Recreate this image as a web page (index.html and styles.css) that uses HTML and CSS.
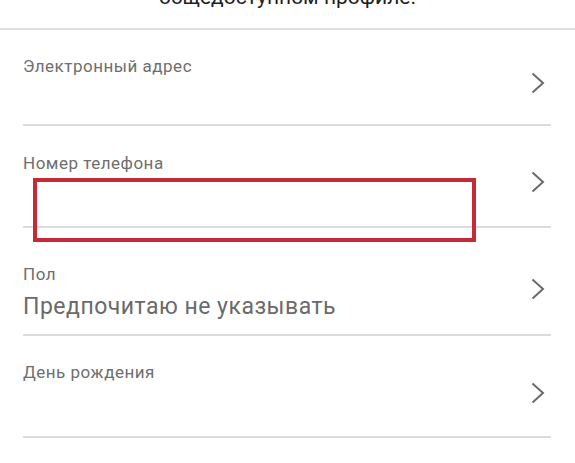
FILE: index.html
```html
<!DOCTYPE html>
<html lang="ru">
<head>
<meta charset="utf-8">
<link rel="stylesheet" href="styles.css">
</head>
<body>
<div class="page">
  <div class="intro"><p class="intro-text">общедоступном профиле.</p></div>
  <div class="list">
    <div class="row row-email">
      <div class="field">
        <div class="label">Электронный адрес</div>
      </div>
      <svg class="chev" viewBox="0 0 14 22" width="14" height="22"><polyline points="1.5,1.5 12,11 1.5,20.5" fill="none" stroke="#6a6a6a" stroke-width="2"/></svg>
    </div>
    <div class="row row-phone">
      <div class="field">
        <div class="label">Номер телефона</div>
      </div>
      <svg class="chev" viewBox="0 0 14 22" width="14" height="22"><polyline points="1.5,1.5 12,11 1.5,20.5" fill="none" stroke="#6a6a6a" stroke-width="2"/></svg>
      <div class="highlight"></div>
    </div>
    <div class="row row-gender">
      <div class="field">
        <div class="label">Пол</div>
        <div class="value">Предпочитаю не указывать</div>
      </div>
      <svg class="chev" viewBox="0 0 14 22" width="14" height="22"><polyline points="1.5,1.5 12,11 1.5,20.5" fill="none" stroke="#6a6a6a" stroke-width="2"/></svg>
    </div>
    <div class="row row-birth">
      <div class="field">
        <div class="label">День рождения</div>
      </div>
      <svg class="chev" viewBox="0 0 14 22" width="14" height="22"><polyline points="1.5,1.5 12,11 1.5,20.5" fill="none" stroke="#6a6a6a" stroke-width="2"/></svg>
    </div>
  </div>
</div>
</body>
</html>
```
FILE: styles.css
```css
html, body {
  margin: 0;
  padding: 0;
  background: #ffffff;
}
body {
  font-family: Roboto, "Noto Sans", "Liberation Sans", sans-serif;
  width: 575px;
  height: 463px;
  overflow: hidden;
}
.intro {
  height: 28px;
  overflow: hidden;
  border-bottom: 2px solid #dedede;
}
.intro-text {
  margin: -16px 0 0 0;
  text-align: center;
  font-size: 21px;
  line-height: 26px;
  color: #1e1e1e;
}
.list {
  padding: 0 24px 0 23px;
}
.row {
  position: relative;
  display: flex;
  align-items: center;
  border-bottom: 2px solid #dcdcdc;
  box-sizing: border-box;
}
.row-email { height: 96px; }
.row-phone { height: 102px; }
.row-gender { height: 108px; }
.row-birth { height: 102px; }
.field {
  flex: 1;
  align-self: flex-start;
}
.row-email .field { padding-top: 26px; }
.row-phone .field { padding-top: 27px; }
.row-gender .field { padding-top: 36px; }
.row-birth .field { padding-top: 26px; }
.label {
  font-size: 17px;
  line-height: 20px;
  letter-spacing: 0.5px;
  color: #6e6e6e;
}
.value {
  margin-top: 10px;
  font-size: 23px;
  line-height: 26px;
  letter-spacing: 0.5px;
  color: #6a6a6a;
}
.chev {
  flex: none;
  margin-right: 6px;
  margin-top: 12px;
}
.row-gender .chev { margin-top: 16px; }
.row-birth .chev { margin-top: 14px; }
.highlight {
  position: absolute;
  left: 10px;
  top: 52px;
  width: 443px;
  height: 64px;
  box-sizing: border-box;
  border: 4.5px solid #c62a36;
}
```
